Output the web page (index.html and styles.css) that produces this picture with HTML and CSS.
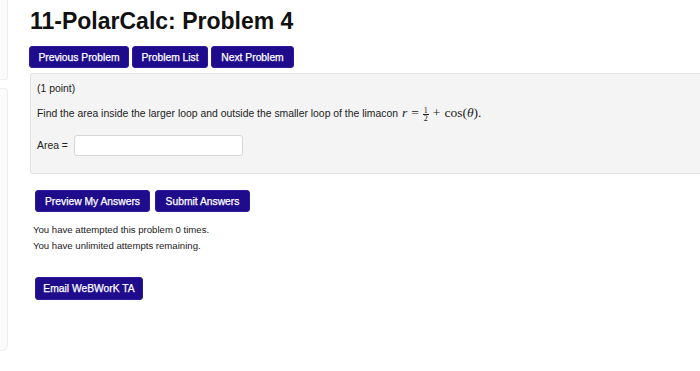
FILE: index.html
```html
<!DOCTYPE html>
<html>
<head>
<meta charset="utf-8">
<link rel="stylesheet" href="styles.css">
</head>
<body>
<div class="page">
  <div class="side">
    <div class="side-top"></div>
    <div class="side-bottom"></div>
  </div>
  <div class="main">
    <h1 class="title">11-PolarCalc: Problem 4</h1>
    <div class="nav">
      <a class="btn nav-btn">Previous Problem</a>
      <a class="btn nav-btn">Problem List</a>
      <a class="btn nav-btn">Next Problem</a>
    </div>
    <div class="problem">
      <p class="points">(1 point)</p>
      <p class="statement">Find the area inside the larger loop and outside the smaller loop of the limacon <span class="math"><i class="mi">r</i><span class="mo">=</span><span class="frac"><span class="num">1</span><span class="den">2</span></span><span class="mo">+</span>cos(<i class="mi">θ</i>).</span></p>
      <div class="answer">
        <label class="answer-label">Area =</label>
        <span class="answer-input"></span>
      </div>
    </div>
    <div class="submit-row">
      <a class="btn sub-btn">Preview My Answers</a>
      <a class="btn sub-btn">Submit Answers</a>
    </div>
    <div class="attempts">
      <p>You have attempted this problem 0 times.</p>
      <p>You have unlimited attempts remaining.</p>
    </div>
    <div class="email-row">
      <a class="btn email-btn">Email WeBWorK TA</a>
    </div>
  </div>
</div>
</body>
</html>
```

FILE: styles.css
```css
html, body {
  margin: 0;
  padding: 0;
  background: #ffffff;
}
body {
  font-family: "Liberation Sans", Arial, sans-serif;
  color: #1a1a1a;
}
.page {
  display: flex;
  min-height: 371px;
}
.side {
  width: 8px;
  flex: 0 0 8px;
  display: flex;
  flex-direction: column;
  gap: 8px;
}
.side-top {
  height: 80px;
  background: #fbfbfb;
  border-right: 1px solid #eeeeee;
  border-bottom: 1px solid #eeeeee;
  border-bottom-right-radius: 3px;
  box-sizing: border-box;
}
.side-bottom {
  height: 263px;
  background: #fbfbfb;
  border-right: 1px solid #eeeeee;
  border-top: 1px solid #eeeeee;
  border-bottom: 1px solid #eeeeee;
  border-radius: 0 4px 6px 0;
  box-sizing: border-box;
}
.main {
  flex: 1;
  padding-left: 22px;
  min-width: 0;
}
.title {
  margin: 0;
  padding-top: 8px;
  font-size: 23px;
  line-height: 26px;
  font-weight: bold;
  color: #111111;
}
.nav {
  display: flex;
  gap: 3px;
  margin-top: 12px;
  margin-left: -1px;
}
.btn {
  display: inline-flex;
  align-items: center;
  justify-content: center;
  box-sizing: border-box;
  height: 22px;
  padding: 0 9px;
  background: #1f0c8c;
  border: 1px solid #2c1a9a;
  border-radius: 3px;
  color: #ffffff;
  font-size: 10.3px;
  -webkit-text-stroke: 0.25px #ffffff;
  white-space: nowrap;
}
.nav-btn.btn:nth-child(1) { width: 100px; }
.nav-btn.btn:nth-child(2) { width: 76px; }
.nav-btn.btn:nth-child(3) { width: 83px; }
.problem {
  margin-top: 5px;
  background: #f4f4f4;
  border: 1px solid #e3e3e3;
  border-right: none;
  border-radius: 3px 0 0 3px;
  padding: 7px 0 17px 6px;
  font-size: 10.4px;
  line-height: 15px;
  color: #222222;
}
.problem p {
  margin: 0;
}
.statement {
  margin-top: 10px !important;
  height: 15px;
}
.math {
  font-family: "Liberation Serif", "Times New Roman", serif;
  font-size: 13.5px;
  line-height: 1;
  white-space: nowrap;
  padding-left: 1px;
}
.mi {
  font-style: italic;
}
.mo {
  padding: 0 4px;
}
.frac {
  display: inline-block;
  vertical-align: -4px;
  text-align: center;
  font-size: 8px;
  line-height: 7.5px;
}
.num, .den {
  display: block;
  padding: 0 1px;
}
.num {
  border-bottom: 0.8px solid #222;
}
.answer {
  display: flex;
  align-items: center;
  gap: 6px;
  margin-top: 14px;
}
.answer-input {
  display: block;
  width: 169px;
  height: 21px;
  box-sizing: border-box;
  background: #ffffff;
  border: 1px solid #d6d6d6;
  border-radius: 3px;
}
.submit-row {
  display: flex;
  gap: 5px;
  margin-top: 16px;
  padding-left: 5px;
}
.sub-btn.btn:nth-child(1) { width: 115px; }
.sub-btn.btn:nth-child(2) { width: 95px; }
.attempts {
  margin-top: 10px;
  padding-left: 3px;
  font-size: 9.6px;
  line-height: 16px;
  color: #1a1a1a;
}
.attempts p {
  margin: 0;
}
.email-row {
  display: flex;
  margin-top: 23px;
  padding-left: 5px;
}
.email-btn.btn {
  width: 108px;
  height: 23px;
}
```
